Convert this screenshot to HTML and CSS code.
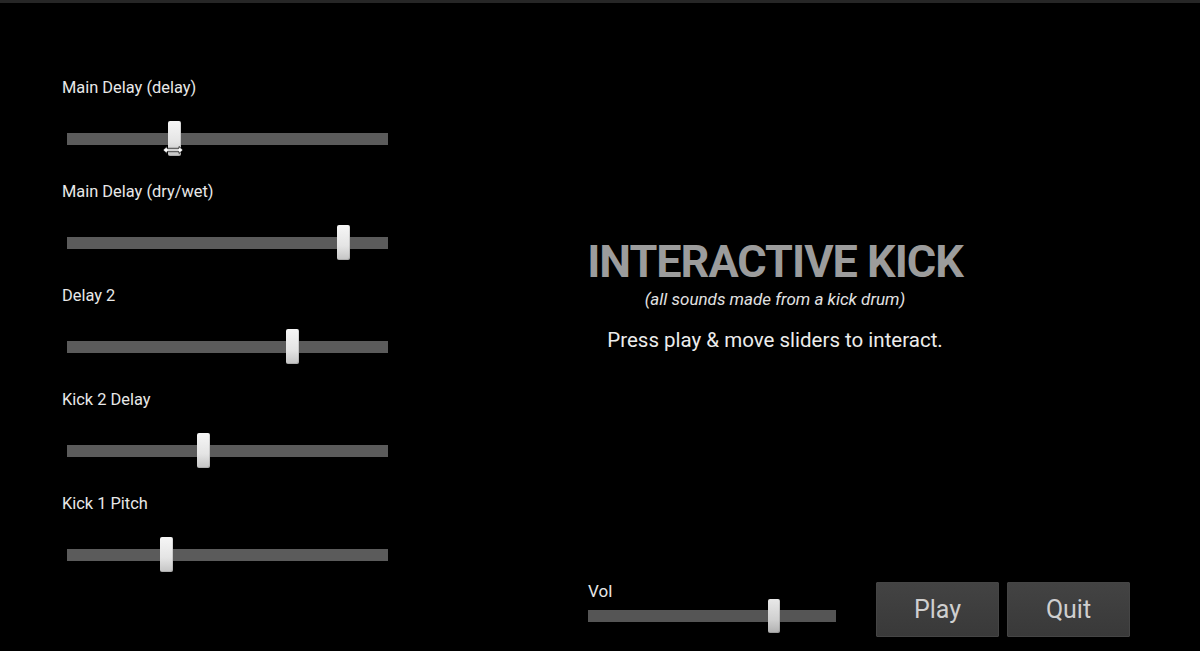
FILE: index.html
```html
<!DOCTYPE html>
<html lang="en">
<head>
<meta charset="utf-8">
<title>Interactive Kick</title>
<link rel="stylesheet" href="styles.css">
</head>
<body>
<div class="app">
  <section class="controls">
    <div class="control">
      <div class="label">Main Delay (delay)</div>
      <div class="slider">
        <div class="track"></div>
        <div class="thumb" style="left:101px"></div>
        <svg class="cursor" width="22" height="10" viewBox="0 0 22 10">
          <path d="M1 5 L5 1.5 L5 3.3 L17 3.3 L17 1.5 L21 5 L17 8.5 L17 6.7 L5 6.7 L5 8.5 Z" fill="#fff" stroke="#111" stroke-width="0.8" stroke-linejoin="round"/>
          <path d="M5.5 5 L16.5 5" stroke="#777" stroke-width="0.6"/>
        </svg>
      </div>
    </div>
    <div class="control">
      <div class="label">Main Delay (dry/wet)</div>
      <div class="slider">
        <div class="track"></div>
        <div class="thumb" style="left:270px"></div>
      </div>
    </div>
    <div class="control">
      <div class="label">Delay 2</div>
      <div class="slider">
        <div class="track"></div>
        <div class="thumb" style="left:219px"></div>
      </div>
    </div>
    <div class="control">
      <div class="label">Kick 2 Delay</div>
      <div class="slider">
        <div class="track"></div>
        <div class="thumb" style="left:130px"></div>
      </div>
    </div>
    <div class="control">
      <div class="label">Kick 1 Pitch</div>
      <div class="slider">
        <div class="track"></div>
        <div class="thumb" style="left:93px"></div>
      </div>
    </div>
  </section>

  <section class="stage">
    <div class="intro">
      <h1 class="title">INTERACTIVE KICK</h1>
      <p class="subtitle">(all sounds made from a kick drum)</p>
      <p class="hint">Press play &amp; move sliders to interact.</p>
    </div>

    <div class="bottom">
      <div class="volume">
        <div class="vol-label">Vol</div>
        <div class="slider slider-vol">
          <div class="track"></div>
          <div class="thumb" style="left:180px"></div>
        </div>
      </div>
      <div class="buttons">
        <button class="btn">Play</button>
        <button class="btn">Quit</button>
      </div>
    </div>
  </section>
</div>
</body>
</html>
```

FILE: styles.css
```css
* {
  box-sizing: border-box;
}

html, body {
  margin: 0;
  padding: 0;
  background: #000;
}

body {
  font-family: Roboto, "Liberation Sans", sans-serif;
  color: #e6e6e6;
  border-top: 3px solid #262626;
}

.app {
  display: flex;
  height: 648px;
}

/* left column of labelled sliders */
.controls {
  width: 400px;
  padding: 75px 0 0 62px;
  display: flex;
  flex-direction: column;
  gap: 25px;
}

.control {
  display: flex;
  flex-direction: column;
  gap: 23px;
}

.label {
  font-size: 16.4px;
  line-height: 20px;
  color: #e8e8e8;
}

.slider {
  position: relative;
  width: 321px;
  height: 36px;
  margin-left: 5px;
}

.track {
  margin-top: 12px;
  height: 12px;
  background: #5b5b5b;
}

.thumb {
  position: absolute;
  top: 0;
  width: 13px;
  height: 35px;
  border-radius: 2px;
  background: linear-gradient(to bottom, #f6f6f6 0%, #e4e4e4 60%, #c4c4c4 100%);
  box-shadow: inset -1px -1px 0 rgba(0, 0, 0, 0.12);
}

.cursor {
  position: absolute;
  left: 95px;
  top: 24px;
}

/* right side: heading and transport */
.stage {
  flex: 1;
  display: flex;
  flex-direction: column;
  padding: 232px 50px 0 0;
}

.intro {
  text-align: center;
}

.title {
  margin: 0;
  font-size: 45px;
  line-height: 54px;
  font-weight: 700;
  color: #9c9c9c;
  letter-spacing: -1px;
}

.subtitle {
  margin: 0;
  font-size: 17px;
  line-height: 20px;
  font-style: italic;
  color: #e2e2e2;
}

.hint {
  margin: 19px 0 0;
  font-size: 20.5px;
  line-height: 24px;
  color: #ececec;
}

.bottom {
  margin-top: auto;
  margin-bottom: 14px;
  padding-left: 188px;
  display: flex;
  align-items: flex-end;
  gap: 40px;
}

.volume {
  display: flex;
  flex-direction: column;
  margin-bottom: 4px;
}

.vol-label {
  font-size: 17px;
  line-height: 20px;
  color: #e6e6e6;
}

.slider-vol {
  width: 248px;
  height: 34px;
  margin: -2px 0 0 0;
}

.slider-vol .track {
  margin-top: 11px;
  height: 12px;
  background: #555;
}

.slider-vol .thumb {
  height: 34px;
  width: 12px;
  background: linear-gradient(to bottom, #e8e8e8 0%, #d0d0d0 60%, #b0b0b0 100%);
}

.buttons {
  display: flex;
  gap: 8px;
}

.btn {
  width: 123px;
  height: 55px;
  border: 1px solid #454545;
  border-radius: 1px;
  background: linear-gradient(to bottom, #434343 0%, #393939 100%);
  color: #cfcfcf;
  font-family: Roboto, "Liberation Sans", sans-serif;
  font-size: 25px;
  padding: 0;
}
```
